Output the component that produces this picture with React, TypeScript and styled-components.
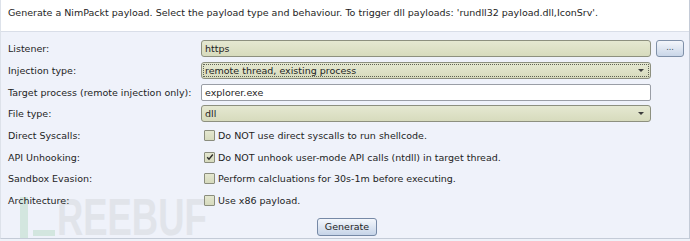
import { Fragment } from 'react';
import styled, { createGlobalStyle } from 'styled-components';

const GlobalStyle = createGlobalStyle`
  html, body {
    margin: 0;
    padding: 0;
    background: #eef2f9;
  }

  body {
    font-family: 'DejaVu Sans', Verdana, sans-serif;
    font-size: 9.5px;
    color: #1e1e1e;
  }
`;

const Window = styled.div`
  position: relative;
  width: 688px;
  height: 238px;
  border-right: 1px solid #c4cbd7;
  border-left: 1px solid #dde2ea;
  border-bottom: 1px solid #c4cbd7;
  background: #eff2fa;
  overflow: hidden;
`;

const Header = styled.div`
  height: 32px;
  background: #ffffff;
  border-bottom: 1px solid #d9dee8;
  padding: 7px 7px 0;
  box-sizing: border-box;
  line-height: 12px;
`;

const Form = styled.div`
  position: relative;
  z-index: 1;
  display: grid;
  grid-template-columns: 193px 450px 34px;
  grid-auto-rows: 21.7px;
  align-items: center;
  padding: 6px 0 0 7px;
`;

const Label = styled.div`
  white-space: nowrap;
`;

const Combo = styled.div<{ $focused?: boolean }>`
  position: relative;
  height: 17px;
  box-sizing: border-box;
  border: 1px solid #8d907f;
  border-radius: 3px;
  background: linear-gradient(#e5e8d1, #d7dbbd);
  padding: 0 0 0 3px;
  display: flex;
  align-items: center;
  outline: ${(p) => (p.$focused ? '1px dotted #5f6255' : 'none')};
  outline-offset: -3px;
`;

const Arrow = styled.span`
  position: absolute;
  right: 6px;
  top: 6px;
  width: 0;
  height: 0;
  border-left: 3px solid transparent;
  border-right: 3px solid transparent;
  border-top: 3px solid #3c3c3c;
`;

const TextField = styled.div`
  height: 17px;
  box-sizing: border-box;
  border: 1px solid #9a9ea6;
  border-radius: 2px;
  background: #ffffff;
  padding: 0 0 0 3px;
  display: flex;
  align-items: center;
`;

const SmallButton = styled.div`
  margin-left: 5px;
  width: 28px;
  height: 17px;
  box-sizing: border-box;
  border: 1px solid #7f90a8;
  border-radius: 3px;
  background: linear-gradient(#f3f6fb, #c9d6e8);
  display: flex;
  align-items: center;
  justify-content: center;
  font-size: 8px;
  color: #3a4a60;
  padding-bottom: 2px;
`;

const CheckRow = styled.div`
  display: flex;
  align-items: center;
  gap: 3px;
  padding-left: 3px;
  white-space: nowrap;
`;

const Box = styled.span`
  width: 11px;
  height: 11px;
  box-sizing: border-box;
  border: 1px solid #8a8d7d;
  border-radius: 1px;
  background: linear-gradient(#e4e7d0, #d6dabd);
  display: flex;
  align-items: center;
  justify-content: center;
`;

const Footer = styled.div`
  position: relative;
  z-index: 1;
  display: flex;
  justify-content: center;
  padding-top: 6px;
  padding-left: 4px;
`;

const Button = styled.div`
  width: 60px;
  height: 18px;
  box-sizing: border-box;
  border: 1px solid #7689a6;
  border-radius: 3px;
  background: linear-gradient(#f4f7fc, #c6d4e8);
  display: flex;
  align-items: center;
  justify-content: center;
`;

const MarkBar = styled.div`
  position: absolute;
  left: 19px;
  top: 197px;
  width: 8px;
  height: 41px;
  background: #d3e6df;
`;

const MarkFoot = styled.div`
  position: absolute;
  left: 32px;
  top: 230px;
  width: 22px;
  height: 6px;
  background: #d3e6df;
`;

const MarkText = styled.span`
  position: absolute;
  left: 56px;
  top: 197px;
  font-family: 'Liberation Sans', Arial, sans-serif;
  font-weight: 700;
  font-size: 52px;
  line-height: 40px;
  color: #e1e4ea;
  transform: scaleX(0.7);
  transform-origin: left top;
  white-space: nowrap;
`;

const Check = () => (
  <svg width="8" height="8" viewBox="0 0 8 8">
    <path d="M1.2 4.2 L3 6.2 L6.8 1.5" fill="none" stroke="#2c2c2c" strokeWidth="1.4" />
  </svg>
);

const options = [
  { label: 'Direct Syscalls:', text: 'Do NOT use direct syscalls to run shellcode.', checked: false },
  { label: 'API Unhooking:', text: 'Do NOT unhook user-mode API calls (ntdll) in target thread.', checked: true },
  { label: 'Sandbox Evasion:', text: 'Perform calcluations for 30s-1m before executing.', checked: false },
  { label: 'Architecture:', text: 'Use x86 payload.', checked: false },
];

export default function App() {
  return (
    <>
      <GlobalStyle />
      <Window>
        <Header>
          Generate a NimPackt payload. Select the payload type and behaviour. To trigger dll payloads: 'rundll32
          payload.dll,IconSrv'.
        </Header>

        <MarkBar />
        <MarkFoot />
        <MarkText>REEBUF</MarkText>

        <Form>
          <Label>Listener:</Label>
          <Combo>https</Combo>
          <SmallButton>...</SmallButton>

          <Label>Injection type:</Label>
          <Combo $focused>
            remote thread, existing process
            <Arrow />
          </Combo>
          <div />

          <Label>Target process (remote injection only):</Label>
          <TextField>explorer.exe</TextField>
          <div />

          <Label>File type:</Label>
          <Combo>
            dll
            <Arrow />
          </Combo>
          <div />

          {options.map((o) => (
            <Fragment key={o.label}>
              <Label>{o.label}</Label>
              <CheckRow>
                <Box>{o.checked && <Check />}</Box>
                {o.text}
              </CheckRow>
              <div />
            </Fragment>
          ))}
        </Form>

        <Footer>
          <Button>Generate</Button>
        </Footer>
      </Window>
    </>
  );
}
